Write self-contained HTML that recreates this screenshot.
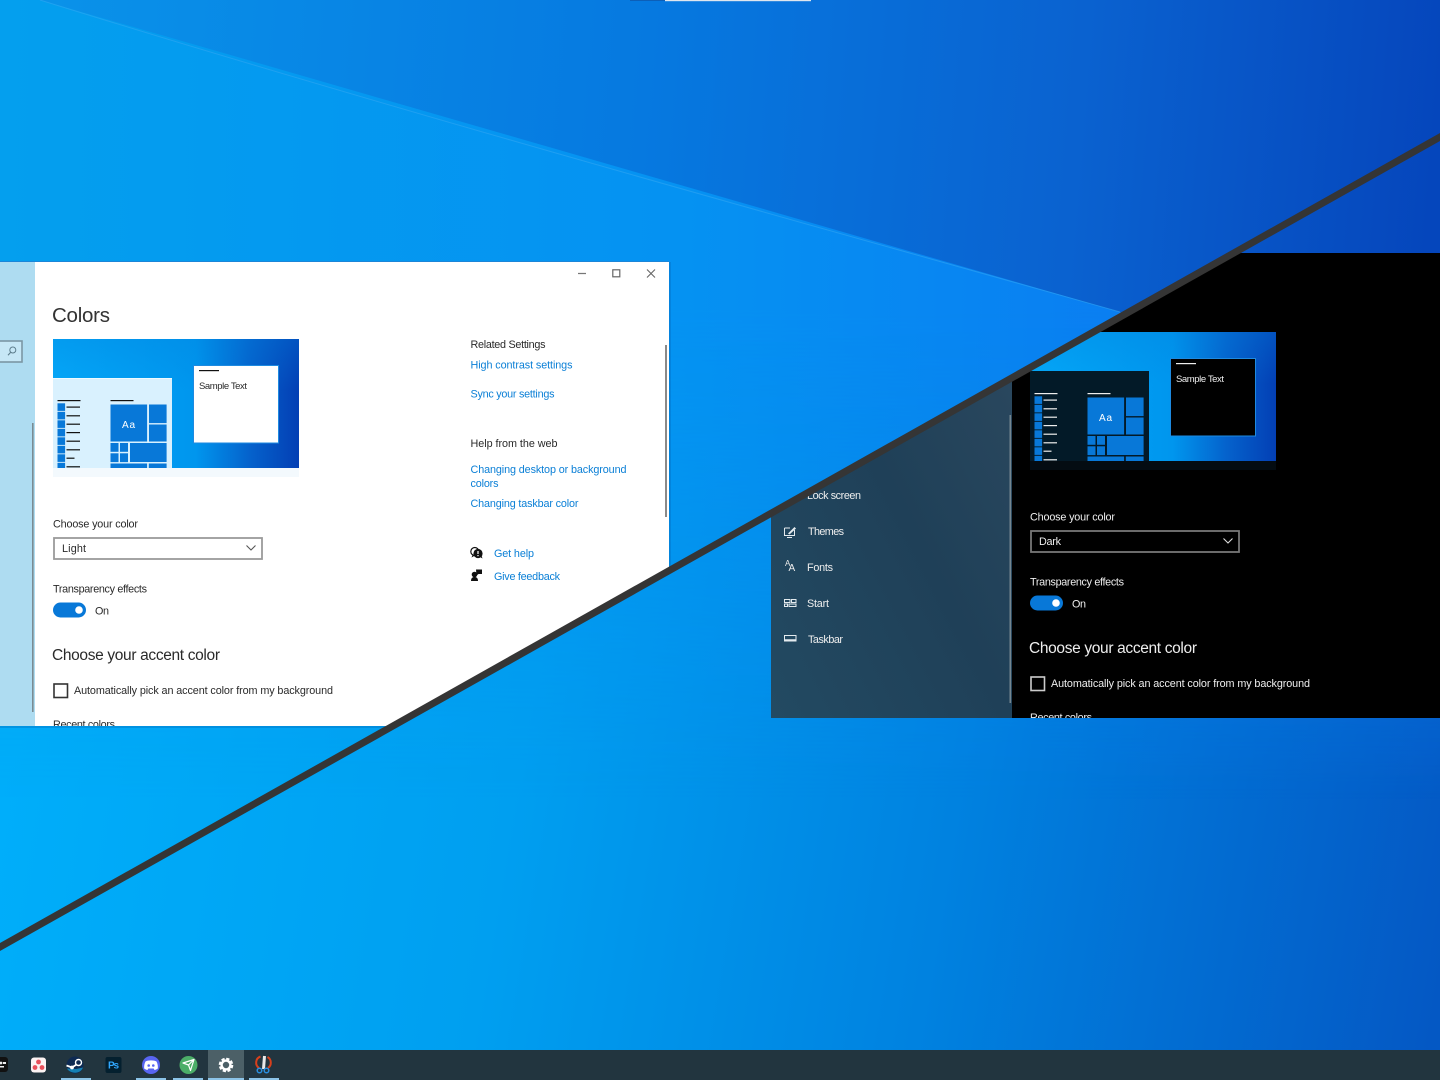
<!DOCTYPE html>
<html><head><meta charset="utf-8"><title>Colors</title>
<style>
html,body{margin:0;padding:0;width:1440px;height:1080px;overflow:hidden;background:#0a8ae8}
svg{display:block;position:absolute;left:0;top:0;filter:blur(.3px)}
text{font-family:"Liberation Sans",sans-serif;font-size:10.800px}
.l text{fill:#2a2a2a}
.d text{fill:#eee}
.l text.a{fill:#0a7fd6}
.h{font-size:15.500px}
.s{font-size:9.500px}
</style></head><body>
<svg width="1440" height="1080" viewBox="0 0 1440 1080" xmlns="http://www.w3.org/2000/svg">
<defs>
<linearGradient id="bgLow" gradientUnits="userSpaceOnUse" x1="0" y1="760" x2="1440" y2="1000">
<stop offset="0" stop-color="#00aefa"/><stop offset=".35" stop-color="#009ff0"/><stop offset=".65" stop-color="#0082e0"/><stop offset="1" stop-color="#0458c4"/></linearGradient>
<linearGradient id="bgMid" gradientUnits="userSpaceOnUse" x1="0" y1="300" x2="1130" y2="320">
<stop offset="0" stop-color="#049fee"/><stop offset=".6" stop-color="#0592f2"/><stop offset="1" stop-color="#0a7ef2"/></linearGradient>
<linearGradient id="bgTop" gradientUnits="userSpaceOnUse" x1="0" y1="0" x2="1440" y2="120">
<stop offset="0" stop-color="#0a94ea"/><stop offset=".45" stop-color="#0679e0"/><stop offset=".75" stop-color="#0a62d0"/><stop offset="1" stop-color="#0546bc"/></linearGradient>
<linearGradient id="fadeV" gradientUnits="userSpaceOnUse" x1="0" y1="300" x2="0" y2="800">
<stop offset="0" stop-color="#fff" stop-opacity="1"/><stop offset="1" stop-color="#fff" stop-opacity="0"/></linearGradient>
<mask id="mv"><rect width="1440" height="1080" fill="url(#fadeV)"/></mask>
<linearGradient id="wp" x1="0" y1="0" x2="1" y2="0">
<stop offset="0" stop-color="#04a8f8"/><stop offset=".58" stop-color="#0096ee"/><stop offset=".8" stop-color="#0562cc"/><stop offset="1" stop-color="#033fb4"/></linearGradient>
<linearGradient id="wpTop" x1="0" y1="0" x2="0" y2="1">
<stop offset="0" stop-color="#0280dc" stop-opacity=".3"/><stop offset=".4" stop-color="#0280dc" stop-opacity="0"/></linearGradient>
<linearGradient id="side" x1="0" y1="1" x2="1" y2="0">
<stop offset="0" stop-color="#234a62"/><stop offset=".5" stop-color="#1f4058"/><stop offset="1" stop-color="#2e4a60"/></linearGradient>
<clipPath id="above"><polygon points="0,0 1440,0 1440,137 0,947"/></clipPath>
<clipPath id="below"><polygon points="0,947 1440,137 1440,1080 0,1080"/></clipPath>
<clipPath id="lw"><rect x="0" y="261" width="669" height="465"/></clipPath>
<clipPath id="dw"><rect x="771" y="253" width="669" height="465"/></clipPath>
<g id="bars">
<rect x="57.500" y="400" width="23" height="1.200"/>
<rect x="110.500" y="400" width="23" height="1.200"/>
<rect x="66.500" y="406.500" width="13.500" height="1.200"/><rect x="66.500" y="415.200" width="13.500" height="1.200"/>
<rect x="66.500" y="423.600" width="13.500" height="1.200"/><rect x="66.500" y="432" width="13.500" height="1.200"/>
<rect x="66.500" y="440.600" width="13.500" height="1.200"/><rect x="66.500" y="449.200" width="13.500" height="1.200"/>
<rect x="66.500" y="457.600" width="8" height="1.200"/><rect x="66.500" y="466.200" width="13.500" height="1.200"/>
</g>
<g id="tiles" fill="#0878d8">
<rect x="57.500" y="403.300" width="7.600" height="7.600"/><rect x="57.500" y="411.800" width="7.600" height="7.600"/>
<rect x="57.500" y="420.300" width="7.600" height="7.600"/><rect x="57.500" y="428.800" width="7.600" height="7.600"/>
<rect x="57.500" y="437.300" width="7.600" height="7.600"/><rect x="57.500" y="445.800" width="7.600" height="7.600"/>
<rect x="57.500" y="454.300" width="7.600" height="7.600"/><rect x="57.500" y="462.800" width="7.600" height="5.200"/>
<rect x="110.500" y="404.500" width="36.600" height="37"/>
<rect x="149" y="404.500" width="17.600" height="18.600"/><rect x="149" y="424.500" width="17.600" height="17"/>
<rect x="110.500" y="443" width="8" height="8.800"/><rect x="120" y="443" width="8" height="8.800"/>
<rect x="110.500" y="453.300" width="8" height="8.800"/><rect x="120" y="453.300" width="8" height="8.800"/>
<rect x="130" y="443" width="36.600" height="19"/>
<rect x="110.500" y="463.500" width="36.600" height="4.500"/><rect x="148.800" y="463.500" width="17.800" height="4.500"/>
</g>
</defs>

<!-- wallpaper -->
<rect width="1440" height="1080" fill="url(#bgLow)"/>
<rect width="1440" height="800" fill="url(#bgMid)" mask="url(#mv)"/>
<polygon points="40,0 1440,0 1440,400 1120,312" fill="url(#bgTop)"/>
<path d="M40,0 C400,112 800,222 1120,312" fill="none" stroke="#35a8f2" stroke-width="1" opacity=".55"/>
<rect x="665" y="0" width="146" height="1.200" fill="#dfe6ee"/>
<rect x="630" y="0" width="35" height="1" fill="#0c5fb8"/>

<!-- light window -->
<g class="l" clip-path="url(#above)">
<rect x="0" y="262" width="671" height="466" fill="#045fb0" opacity=".3"/>
<g clip-path="url(#lw)">
<rect x="0" y="261" width="669" height="465" fill="#fff"/>
<rect x="0" y="261" width="669" height="1" fill="#1c86d8"/>
<rect x="0" y="262" width="35" height="464" fill="#aedcf1"/>
<rect x="-3" y="341" width="25" height="21" fill="#c6e7f6" stroke="#7b97a4" stroke-width="1.600"/>
<circle cx="12.800" cy="350" r="3" fill="none" stroke="#5d7d8c" stroke-width="1"/>
<path d="M10.600,352.400 L8,355.200" stroke="#5d7d8c" stroke-width="1.100"/>
<rect x="32" y="423" width="1.600" height="289" fill="#7b8b92"/>
<rect x="665" y="345" width="2" height="172" fill="#8a8a8a"/>
<path d="M578,273.500 H586" stroke="#777" stroke-width="1.200"/>
<rect x="612.800" y="269.800" width="7" height="7" fill="none" stroke="#666" stroke-width="1.200"/>
<path d="M647,269.500 L655,277.500 M655,269.500 L647,277.500" stroke="#666" stroke-width="1.100"/>
<text x="52" y="322" style="font-size:20.500px;fill:#333" textLength="58">Colors</text>

<rect x="53" y="339" width="246" height="129" fill="url(#wp)"/>
<rect x="53" y="339" width="246" height="129" fill="url(#wpTop)"/>
<rect x="53" y="468" width="246" height="9" fill="#f3f9fd"/>
<rect x="53" y="378" width="119" height="90" fill="#d9f1fe"/>
<rect x="53" y="378" width="119" height="1" fill="#eefaff"/>
<use href="#tiles"/>
<use href="#bars" fill="#111"/>
<text x="122" y="428" style="font-size:10px;fill:#fff" textLength="13">Aa</text>
<rect x="193.500" y="365.500" width="85" height="77.500" fill="#fff" stroke="#1e8ae0"/>
<rect x="199" y="370" width="20" height="1.200" fill="#111"/>
<text x="199" y="389" class="s" textLength="48">Sample Text</text>

<text x="53" y="527.500" textLength="85">Choose your color</text>
<rect x="54" y="538" width="208" height="21" fill="#fff" stroke="#9a9a9a" stroke-width="1.800"/>
<text x="62" y="552" textLength="24">Light</text>
<path d="M246.500,545.500 L251,550 L255.500,545.500" fill="none" stroke="#555" stroke-width="1.100"/>
<text x="53" y="592.500" textLength="94">Transparency effects</text>
<rect x="53" y="602.500" width="33" height="15" rx="7.500" fill="#0878d8"/>
<circle cx="79" cy="610" r="3.800" fill="#fff"/>
<text x="95" y="614.500" textLength="14">On</text>
<text x="52" y="660" class="h" textLength="168">Choose your accent color</text>
<rect x="54" y="684" width="13.500" height="13.500" fill="#fff" stroke="#333" stroke-width="1.600"/>
<text x="74" y="694" textLength="259">Automatically pick an accent color from my background</text>
<text x="53" y="728" textLength="62">Recent colors</text>

<text x="470.500" y="348" textLength="75">Related Settings</text>
<text class="a" x="470.500" y="368.500" textLength="102">High contrast settings</text>
<text class="a" x="470.500" y="397.500" textLength="84">Sync your settings</text>
<text x="470.500" y="447" textLength="87">Help from the web</text>
<text class="a" x="470.500" y="473" textLength="156">Changing desktop or background</text>
<text class="a" x="470.500" y="487" textLength="28">colors</text>
<text class="a" x="470.500" y="507" textLength="108">Changing taskbar color</text>
<circle cx="474.800" cy="551.500" r="4" fill="#fff" stroke="#111" stroke-width="1.200"/>
<path d="M472.500,555 L471.500,557.500 L475,555.500" fill="#111"/>
<circle cx="478" cy="553.500" r="4.600" fill="#111"/>
<path d="M480,557 L482.500,558.500 L481.500,555.500 Z" fill="#111"/>
<rect x="477.400" y="551" width="1.200" height="3" fill="#fff"/><rect x="477.400" y="555" width="1.200" height="1.200" fill="#fff"/>
<text class="a" x="494" y="557" textLength="40">Get help</text>
<circle cx="474.500" cy="574.500" r="2.800" fill="#111"/>
<path d="M471,581 C471,577.500 473,577 474.500,577 C476,577 478,577.500 478,581 Z" fill="#111"/>
<path d="M476,569.500 H482 V574 H478.500 L476.500,575.500 Z" fill="#111"/>
<text class="a" x="494" y="580" textLength="66">Give feedback</text>
</g>
</g>

<!-- dark window -->
<g class="d" clip-path="url(#below)">
<g clip-path="url(#dw)">
<rect x="771" y="253" width="669" height="465" fill="#000"/>
<rect x="771" y="253" width="241" height="465" fill="url(#side)"/>
<rect x="1009.500" y="415" width="1.600" height="288" fill="#74858f"/>
<g fill="none" stroke="#e4ebef" stroke-width="1">
<path d="M784.500,528 H790 M794.500,530 V535.500 H784.500 V528 M787,537.500 H792"/><path d="M788,533.500 L794.500,527 L796,528.500 L789.500,534.500 Z" fill="#e4ebef" stroke="none"/>
<rect x="784.500" y="599.500" width="5.500" height="3"/><rect x="791.500" y="599.500" width="4.500" height="3"/><rect x="784.500" y="604" width="3" height="2.500"/><rect x="789" y="604" width="7" height="2.500"/>
<rect x="784.500" y="635.500" width="11.500" height="5.500"/><path d="M785,640 H796" stroke-width="1.600"/>
</g>
<text x="785" y="566" style="font-size:8px" textLength="5.500">A</text>
<text x="788.500" y="571" style="font-size:10px" textLength="6.500">A</text>
<text x="807" y="499" textLength="54">Lock screen</text>
<text x="808" y="535" textLength="36">Themes</text>
<text x="807" y="571" textLength="26">Fonts</text>
<text x="807" y="607" textLength="22">Start</text>
<text x="808" y="643" textLength="35">Taskbar</text>

<g transform="translate(977,-7)">
<rect x="53" y="339" width="246" height="129" fill="url(#wp)"/>
<rect x="53" y="339" width="246" height="129" fill="url(#wpTop)"/>
<rect x="53" y="468" width="246" height="9" fill="#040c12"/>
<rect x="53" y="378" width="119" height="90" fill="#031a28"/>
<use href="#tiles"/>
<use href="#bars" fill="#eee"/>
<text x="122" y="428" style="font-size:10px;fill:#fff" textLength="13">Aa</text>
<rect x="193.500" y="365.500" width="85" height="77.500" fill="#000" stroke="#1e8ae0"/>
<rect x="199" y="370" width="20" height="1.200" fill="#eee"/>
<text x="199" y="389" class="s" textLength="48">Sample Text</text>
<text x="53" y="527.500" textLength="85">Choose your color</text>
<rect x="54" y="538" width="208" height="21" fill="#000" stroke="#777" stroke-width="1.800"/>
<text x="62" y="552" textLength="22">Dark</text>
<path d="M246.500,545.500 L251,550 L255.500,545.500" fill="none" stroke="#ddd" stroke-width="1.100"/>
<text x="53" y="592.500" textLength="94">Transparency effects</text>
<rect x="53" y="602.500" width="33" height="15" rx="7.500" fill="#0878d8"/>
<circle cx="79" cy="610" r="3.800" fill="#fff"/>
<text x="95" y="614.500" textLength="14">On</text>
<text x="52" y="660" class="h" textLength="168">Choose your accent color</text>
<rect x="54" y="684" width="13.500" height="13.500" fill="#000" stroke="#ccc" stroke-width="1.600"/>
<text x="74" y="694" textLength="259">Automatically pick an accent color from my background</text>
<text x="53" y="728" textLength="62">Recent colors</text>
</g>
</g>
</g>

<!-- divider -->
<line x1="-10" y1="952.600" x2="1450" y2="131.400" stroke="#353535" stroke-width="7"/>

<!-- taskbar -->
<rect x="0" y="1050" width="1440" height="30" fill="#22353f"/>
<rect x="208" y="1050" width="36" height="30" fill="#4c6067"/>
<g fill="#8cc4e8">
<rect x="61" y="1078" width="30" height="2"/><rect x="136" y="1078" width="30" height="2"/><rect x="173" y="1078" width="30" height="2"/><rect x="208" y="1078" width="36" height="2"/><rect x="249" y="1078" width="30" height="2"/>
</g>
<rect x="-6" y="1057" width="14" height="15" rx="3" fill="#111"/>
<circle cx="1" cy="1063" r="1.400" fill="#eee"/><rect x="3" y="1062" width="3" height="2" fill="#eee"/><rect x="0" y="1066" width="4" height="1.500" fill="#eee"/>
<rect x="31" y="1057.500" width="15" height="15" rx="3" fill="#fbf3f3"/>
<circle cx="38.500" cy="1062" r="2.400" fill="#e8505b"/><circle cx="35" cy="1067.500" r="2.400" fill="#e8505b"/><circle cx="42" cy="1067.500" r="2.400" fill="#e8505b"/>
<circle cx="75" cy="1065" r="8.500" fill="#0e2a52"/>
<path d="M67,1068.500 C69,1073 80,1075.500 83,1067.500 L76,1069 Z" fill="#1480b4"/>
<circle cx="78.500" cy="1062.500" r="3" fill="none" stroke="#fff" stroke-width="1.400"/>
<circle cx="72" cy="1067.500" r="1.900" fill="#fff"/>
<path d="M66.500,1065.500 L72,1067.500 L76.500,1064.500" fill="none" stroke="#fff" stroke-width="1.800"/>
<rect x="105.500" y="1057" width="16" height="16" rx="2" fill="#04202f"/>
<text x="108" y="1068.500" style="font-size:10px;font-weight:bold;fill:#31a8ff" textLength="11">Ps</text>
<circle cx="151" cy="1065" r="9" fill="#5865f2"/>
<path d="M145.500,1061.500 C148,1060 154,1060 156.500,1061.500 C157.800,1064 158,1066.500 157.800,1068.500 C156.500,1069.500 155.500,1069.800 154.500,1070 L153.700,1068.500 L148.300,1068.500 L147.500,1070 C146.500,1069.800 145.500,1069.500 144.200,1068.500 C144,1066.500 144.200,1064 145.500,1061.500 Z" fill="#fff"/>
<circle cx="148.700" cy="1065.500" r="1.300" fill="#5865f2"/><circle cx="153.300" cy="1065.500" r="1.300" fill="#5865f2"/>
<circle cx="188.500" cy="1065" r="9" fill="#4cae68"/>
<path d="M183,1063 L194,1059.500 L190.500,1070.500 L188.500,1065 Z M188.500,1065 L194,1059.500" fill="none" stroke="#fff" stroke-width="1.200" stroke-linejoin="round"/>
<circle cx="226" cy="1065" r="4.400" fill="none" stroke="#fff" stroke-width="2.400"/>
<circle cx="226" cy="1065" r="6.300" fill="none" stroke="#fff" stroke-width="2" stroke-dasharray="3.300 1.650"/>
<path d="M260.500,1056.500 A6.500,6.500 0 0 0 259,1068 M267.500,1057 A6.500,6.500 0 0 1 268,1068" fill="none" stroke="#d8401c" stroke-width="2"/>
<path d="M264.500,1056 L263.500,1069" stroke="#e8e8e8" stroke-width="3"/>
<circle cx="259.500" cy="1070.500" r="2.300" fill="none" stroke="#2a8fe0" stroke-width="1.500"/>
<circle cx="266.500" cy="1070.500" r="2.300" fill="none" stroke="#2a8fe0" stroke-width="1.500"/>
</svg>
</body></html>
